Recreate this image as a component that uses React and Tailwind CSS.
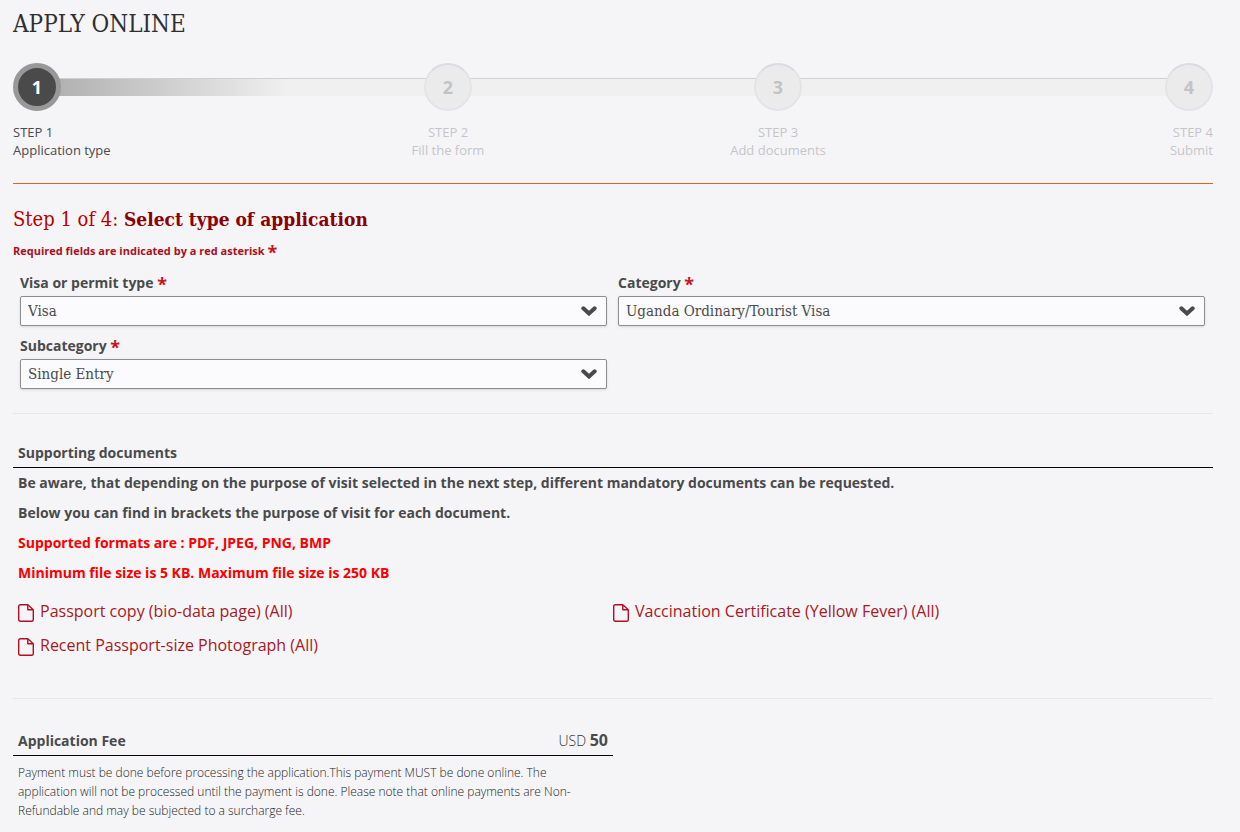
import { useState } from 'react'

const STEPS = [
  { n: 1, title: 'Application type', align: 'items-start text-left' },
  { n: 2, title: 'Fill the form',    align: 'items-center text-center' },
  { n: 3, title: 'Add documents',    align: 'items-center text-center' },
  { n: 4, title: 'Submit',           align: 'items-end text-right' },
]

const DOCUMENTS = [
  'Passport copy (bio-data page) (All)',
  'Vaccination Certificate (Yellow Fever) (All)',
  'Recent Passport-size Photograph (All)',
]

const SERIF = "font-['DejaVu_Serif_Condensed','DejaVu_Serif',serif]"

function Asterisk() {
  return <span className="align-middle text-lg leading-none text-[#d01020]">*</span>
}

function Stepper({ current }) {
  return (
    <div className="grid">
      {/* track behind the circles */}
      <div className="col-start-1 row-start-1 mx-6 mt-[15px] h-[18px] border-t border-[#cfcfd3] bg-linear-to-r from-[#acacac] to-[#f0f0f0] to-[250px]" />
      <ol className="col-start-1 row-start-1 grid grid-cols-[9fr_11fr_11fr_9fr]">
        {STEPS.map(s => {
          const active = s.n === current
          return (
            <li key={s.n} className={`flex flex-col ${s.align} ${active ? 'text-[#4a4a4c]' : 'text-[#c5c5c8]'}`}>
              <span className={`flex size-12 items-center justify-center rounded-full text-lg font-bold ${
                active ? 'border-[5px] border-[#989898] bg-[#4a4a4b] text-white' : 'border-2 border-[#e4e4e8] border-t-[#dcdce0] bg-[#ebebec] text-[#c3c3c4]'}`}>
                {s.n}
              </span>
              <span className="mt-3 text-[13px] leading-[18px]">STEP {s.n}</span>
              <span className="text-[13px] leading-[18px]">{s.title}</span>
            </li>
          )
        })}
      </ol>
    </div>
  )
}

function SelectField({ id, label, options }) {
  const [value, setValue] = useState(options[0])
  return (
    <div>
      <label htmlFor={id} className="block h-6 text-sm leading-[22px] font-bold">
        {label} <Asterisk />
      </label>
      <div className="relative">
        <select
          id={id}
          value={value}
          onChange={e => setValue(e.target.value)}
          className={`block h-[30px] w-full appearance-none rounded-xs border border-[#8d8d90] bg-[#fbfbfd] px-[7px] text-[15px] shadow-sm ${SERIF}`}
        >
          {options.map(o => <option key={o}>{o}</option>)}
        </select>
        <svg viewBox="0 0 16 10" className="pointer-events-none absolute top-[10px] right-[10px] h-[10px] w-4" fill="none" stroke="#4a4a4c" strokeWidth="4" strokeLinecap="round">
          <path d="M2.3 2.3 8 7.5l5.700-5.200" />
        </svg>
      </div>
    </div>
  )
}

function FileIcon() {
  return (
    <svg viewBox="0 0 16 18" className="mt-1 h-[18px] w-4 shrink-0" fill="none" stroke="#b01020" strokeWidth="1.4" strokeLinejoin="round">
      <path d="M2.200.7h7.600l5.500 5v10.100a1.500 1.500 0 0 1-1.500 1.500H2.200a1.500 1.500 0 0 1-1.500-1.500V2.200a1.500 1.500 0 0 1 1.500-1.500z" />
      <path d="M9.800.9v4.900h5.200" />
    </svg>
  )
}

export default function App() {
  return (
    <main className="min-h-screen bg-[#f5f5f7] pt-2 pr-[27px] pb-3 pl-[13px] font-['Open_Sans',sans-serif] text-[#4a4a4c]">
      <h1 className={`mb-[23px] text-2xl leading-8 text-[#2f2f31] ${SERIF}`}>APPLY ONLINE</h1>

      <Stepper current={1} />
      <hr className="mt-6 h-px border-0 bg-[#d2691e]" />

      <h2 className={`mt-5 text-xl leading-[30px] text-[#b80000] ${SERIF}`}>
        Step 1 of 4: <b className="text-[19px] text-[#8b0000]">Select type of application</b>
      </h2>
      <p className="mt-2 h-[18px] text-[11px] leading-[18px] font-bold text-[#a8101e]">
        Required fields are indicated by a red asterisk <Asterisk />
      </p>

      <form className="mt-3 grid grid-cols-2 gap-x-[11px] gap-y-[9px] pr-2 pl-[7px]">
        <SelectField id="permit-type" label="Visa or permit type" options={['Visa', 'Permit', 'Pass']} />
        <SelectField id="category" label="Category" options={['Uganda Ordinary/Tourist Visa', 'East Africa Tourist Visa']} />
        <SelectField id="subcategory" label="Subcategory" options={['Single Entry', 'Multiple Entry']} />
      </form>

      <section className="mt-6 border-t border-[#e6e6e9] pt-6">
        <h3 className="border-b border-black px-[5px] pt-[5px] pb-1 text-sm leading-5 font-bold">Supporting documents</h3>
        <div className="px-[5px] text-sm leading-[30px] font-bold">
          <p>Be aware, that depending on the purpose of visit selected in the next step, different mandatory documents can be requested.</p>
          <p>Below you can find in brackets the purpose of visit for each document.</p>
          <p className="text-[#fa0000]">Supported formats are : PDF, JPEG, PNG, BMP</p>
          <p className="text-[#fa0000]">Minimum file size is 5 KB. Maximum file size is 250 KB</p>
        </div>
        <ul className="mt-[11px] grid grid-cols-2 gap-y-[10px] px-[5px]">
          {DOCUMENTS.map(doc => (
            <li key={doc}>
              <a href="#" className="flex items-center gap-[6px] text-base leading-6 text-[#a81824]">
                <FileIcon />
                {doc}
              </a>
            </li>
          ))}
        </ul>
      </section>

      <section className="mt-[41px] border-t border-[#e6e6e9] pt-7">
        <div className="w-1/2">
          <div className="flex items-center justify-between border-b border-black px-[5px] text-sm leading-7">
            <h3 className="font-bold">Application Fee</h3>
            <p className="font-light text-[#2f2f31]">USD <b className="text-base leading-none font-bold text-[#4a4a4c]">50</b></p>
          </div>
          <p className="px-[5px] pt-[7px] text-xs leading-[19px] font-light text-[#1c1c1e]">
            Payment must be done before processing the application.This payment MUST be done online. The application
            will not be processed until the payment is done. Please note that online payments are Non-Refundable and
            may be subjected to a surcharge fee.
          </p>
        </div>
      </section>
    </main>
  )
}
